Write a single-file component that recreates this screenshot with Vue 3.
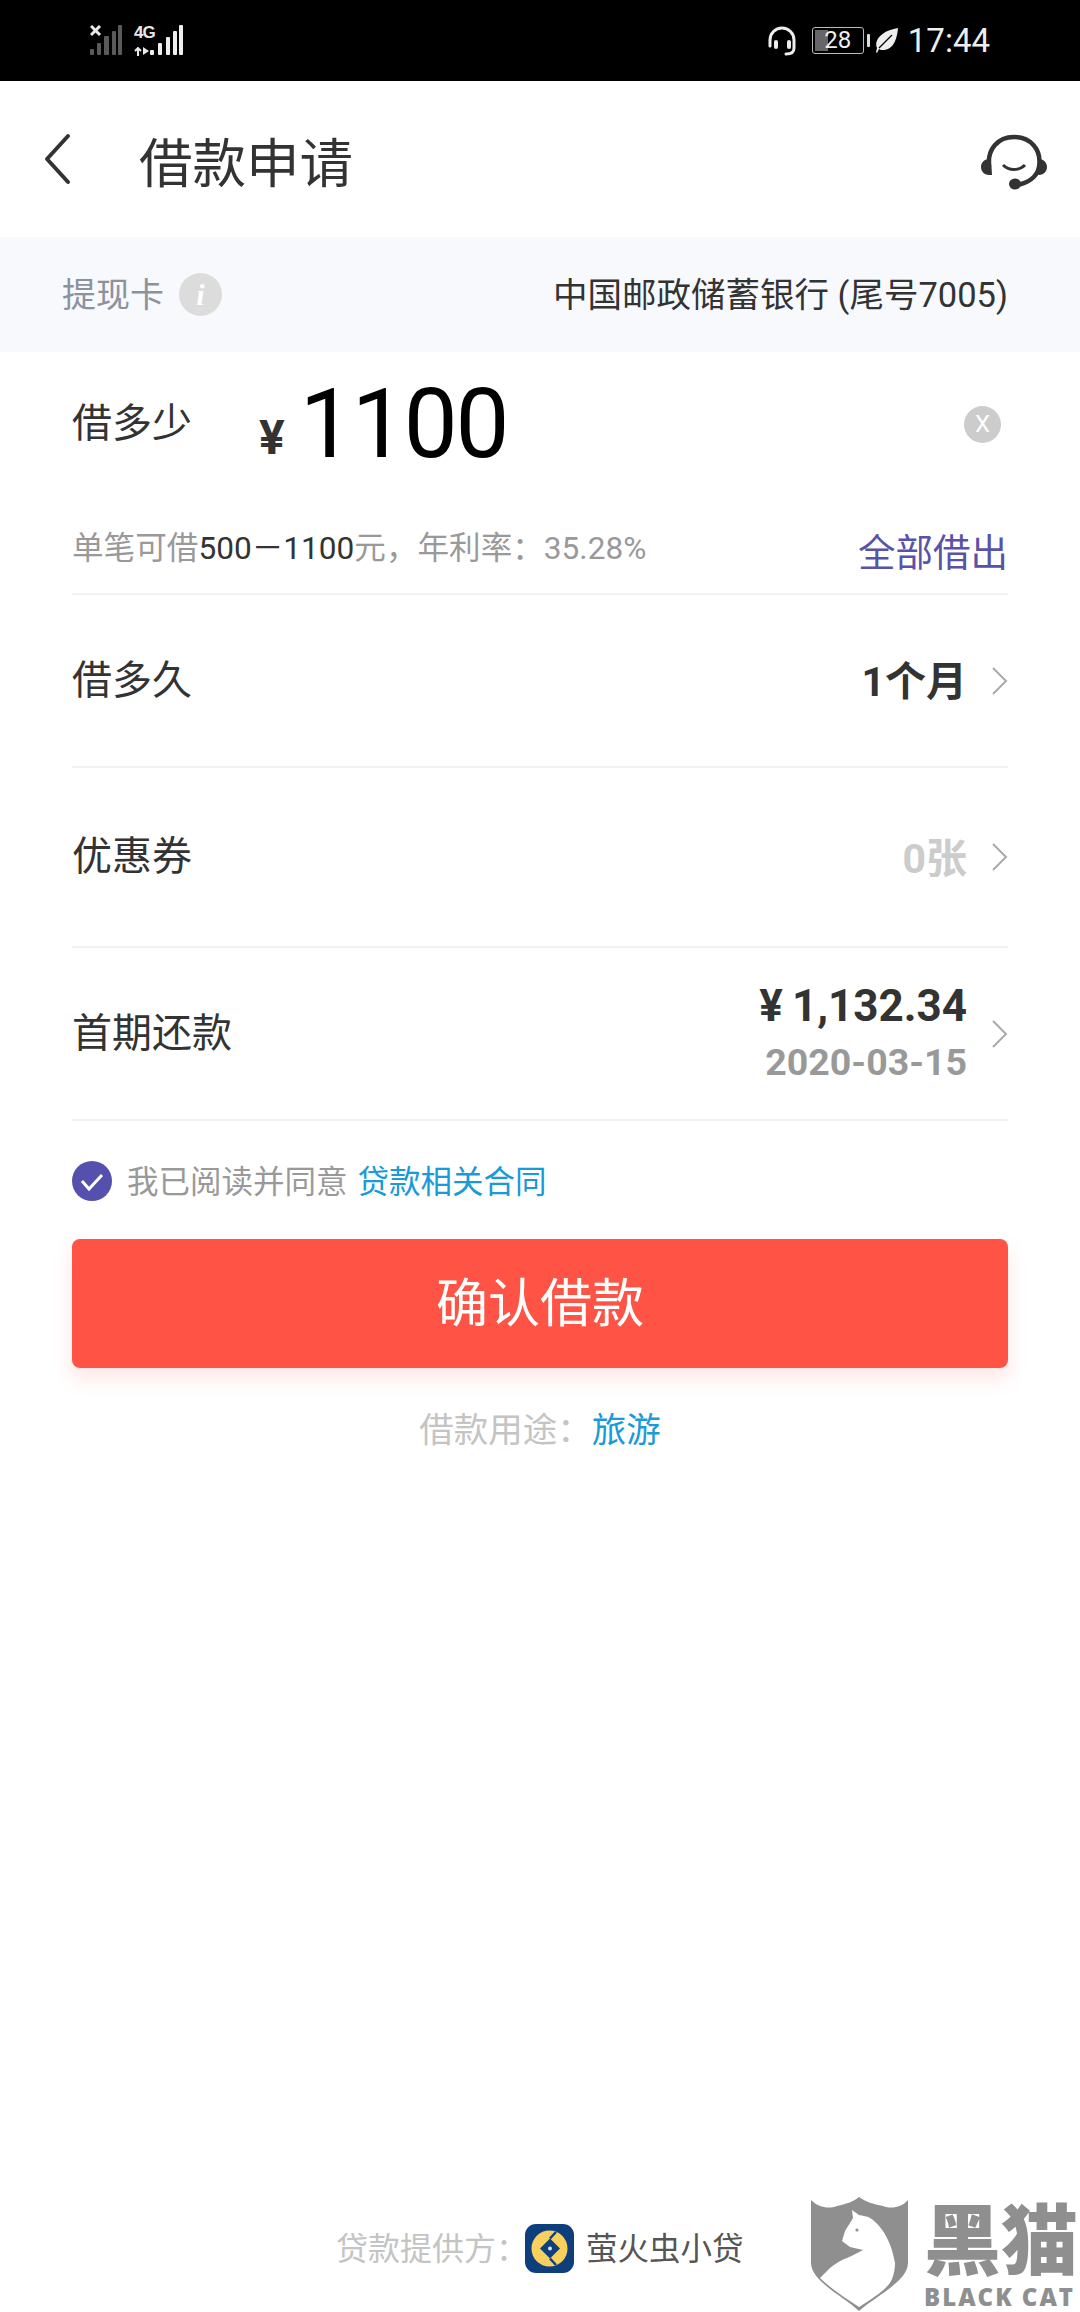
<script setup>
const rows = [
  { label: "借多久", value: "1个月", cls: "row-term" },
  { label: "优惠券", value: "0张", cls: "row-coupon muted" },
];
</script>

<template>
  <div class="page">
    <div class="status-bar">
      <div class="signals">
        <svg width="34" height="31" viewBox="0 0 34 31">
          <path d="M1 1l9 9M10 1l-9 9" stroke="#e8e8e8" stroke-width="3" />
          <g fill="#5a5a5a">
            <rect x="0" y="24" width="4" height="6" rx="1" />
            <rect x="7" y="18" width="4" height="12" rx="1" />
            <rect x="14" y="11" width="5" height="19" rx="1" />
            <rect x="22" y="6" width="4" height="24" rx="1" />
            <rect x="28" y="0" width="4" height="30" rx="1" />
          </g>
        </svg>
        <div class="net">
          <span class="net-label">4G</span>
          <svg width="15" height="9" viewBox="0 0 15 9">
            <path d="M4 9V1M1 4l3-3 3 3" fill="none" stroke="#e8e8e8" stroke-width="2" />
            <path d="M9 0l6 4-6 4z" fill="#e8e8e8" />
          </svg>
        </div>
        <svg width="34" height="31" viewBox="0 0 34 31" fill="#eee">
          <rect x="0" y="25" width="4" height="5" rx="1" />
          <rect x="8" y="18" width="4" height="12" rx="1" />
          <rect x="16" y="12" width="4" height="18" rx="1" />
          <rect x="23" y="6" width="4" height="24" rx="1" />
          <rect x="29" y="0" width="4" height="30" rx="1" />
        </svg>
      </div>
      <div class="status-right">
        <svg width="30" height="32" viewBox="0 0 30 32" fill="none">
          <path d="M3 21V15a12 12 0 0 1 24 0v8c0 4-2 6-8 6" stroke="#eee" stroke-width="3" stroke-linecap="round" />
          <rect x="7" y="15" width="4" height="9" rx="2" fill="#eee" />
          <rect x="20" y="15" width="4" height="9" rx="2" fill="#eee" />
        </svg>
        <div class="battery">
          <div class="battery-fill"></div>
          <span>28</span>
        </div>
        <div class="battery-tip"></div>
        <svg class="leaf" width="23" height="25" viewBox="0 0 23 25">
          <path d="M23 0C22 12 18 22 8 22c-1 0-3 0-4-1L2 25l-1-1 1-4C-2 11 9 2 23 0z" fill="#eee" />
          <path d="M4 20L17 7" stroke="#000" stroke-width="1.2" />
        </svg>
        <span class="time">17:44</span>
      </div>
    </div>

    <div class="nav">
      <svg class="back" width="32" height="52" viewBox="0 0 32 52" fill="none">
        <path d="M27 3L6 26l21 23" stroke="#333" stroke-width="4" stroke-linecap="round" stroke-linejoin="round" />
      </svg>
      <h1 class="title">借款申请</h1>
      <svg class="service" width="68" height="56" viewBox="0 0 68 56" fill="none">
        <path d="M9 33C7 15 18 3 34 3s28 12 25 30c-2 10-11 16-22 18" stroke="#333" stroke-width="4.5" />
        <path d="M9 25c-5 0-8 4-8 8s3 8 8 8h3l-1-16zM59 25c5 0 8 4 8 8s-3 8-8 8l-2-1z" fill="#333" />
        <ellipse cx="35" cy="50" rx="6" ry="5.5" fill="#333" />
        <path d="M23 31c6 6 16 6 22 0" stroke="#333" stroke-width="3" />
      </svg>
    </div>

    <div class="card-bar">
      <div class="card-left">
        <span class="card-label">提现卡</span>
        <span class="info">i</span>
      </div>
      <span class="card-name">中国邮政储蓄银行 (尾号7005)</span>
    </div>

    <div class="form">
      <div class="amount">
        <div class="amount-top">
          <span class="label">借多少</span>
          <span class="yen">¥</span>
          <span class="num">1100</span>
          <span class="clear">X</span>
        </div>
        <div class="hint-row">
          <span class="hint">单笔可借<b>500－1100</b>元，年利率：35.28%</span>
          <span class="all">全部借出</span>
        </div>
      </div>

      <div v-for="row in rows" :key="row.label" class="row" :class="row.cls">
        <span class="label">{{ row.label }}</span>
        <div class="row-right">
          <span class="row-value">{{ row.value }}</span>
          <svg class="chev" width="17" height="30" viewBox="0 0 17 30" fill="none">
            <path d="M2 2l13 13L2 28" stroke="#aaa" stroke-width="2" />
          </svg>
        </div>
      </div>

      <div class="row row-first">
        <span class="label">首期还款</span>
        <div class="row-right">
          <div class="repay">
            <span class="repay-amt"><i>¥</i>1,132.34</span>
            <span class="repay-date">2020-03-15</span>
          </div>
          <svg class="chev" width="17" height="30" viewBox="0 0 17 30" fill="none">
            <path d="M2 2l13 13L2 28" stroke="#aaa" stroke-width="2" />
          </svg>
        </div>
      </div>

      <div class="agree">
        <svg width="40" height="40" viewBox="0 0 40 40">
          <circle cx="20" cy="20" r="20" fill="#5550ad" />
          <path d="M10 20l7 8 13-14" fill="none" stroke="#fff" stroke-width="3" />
        </svg>
        <span class="agree-text">我已阅读并同意</span>
        <span class="link">贷款相关合同</span>
      </div>

      <button class="submit">确认借款</button>

      <div class="purpose">借款用途：<span class="link">旅游</span></div>
    </div>

    <div class="spacer"></div>

    <div class="footer">
      <span class="provider">贷款提供方：</span>
      <svg class="logo" width="49" height="49" viewBox="0 0 49 49">
        <rect width="49" height="49" rx="11" fill="#0e3f7c" />
        <circle cx="24.5" cy="24.5" r="18" fill="#f7d05e" />
        <path d="M25 14.5L35 24.5 25 34.5 15 24.5z" fill="#0e3f7c" />
        <path d="M25 14.5L31 8M25 34.5L31 41" stroke="#0e3f7c" stroke-width="2.5" />
        <circle cx="25" cy="24.5" r="2" fill="#cfeee0" />
      </svg>
      <span class="provider-name">萤火虫小贷</span>
    </div>

    <div class="watermark">
      <svg class="shield" width="98" height="115" viewBox="0 0 98 115">
        <path d="M0 3c8 8 18 9 26 6 9-2 16-4 22-9 7 5 14 7 24 9 8 3 18 2 25-6v63c0 18-32 33-49 48C32 99 0 84 0 66z" fill="#8f8f8f" />
        <path d="M41 13l7 5c4 1 8 1 11 3 13 8 22 26 25 45 0 8-2 15-5 20-7 9-20 17-31 24C36 102 20 92 9 81l10-10c5-4 11-8 17-10 6-3 11-5 16-8l-13-3-8-6 3-10 5-8 3-5z" fill="#fff" />
        <circle cx="46" cy="33" r="1.6" fill="#8f8f8f" />
      </svg>
      <div class="wm-text">
        <span class="wm-cn">黑猫</span>
        <span class="wm-en">BLACK CAT</span>
      </div>
    </div>
  </div>
</template>

<style>
html,
body {
  margin: 0;
  background: #fff;
}
</style>

<style scoped>
.page {
  position: relative;
  width: 1080px;
  height: 2312px;
  display: flex;
  flex-direction: column;
  overflow: hidden;
  background: #fff;
  font-family: Roboto, "Noto Sans CJK SC", sans-serif;
  color: #333;
}

.status-bar {
  height: 81px;
  flex: none;
  background: #000;
  display: flex;
  justify-content: space-between;
  align-items: center;
  padding: 0 90px;
  box-sizing: border-box;
}
.signals {
  display: flex;
  align-items: flex-start;
  margin-top: -1px;
}
.net {
  width: 16px;
  margin: 0 0 0 10px;
  display: flex;
  flex-direction: column;
  gap: 7px;
}
.net-label {
  font-size: 17px;
  line-height: 15px;
  font-weight: 700;
  letter-spacing: -1px;
  color: #e8e8e8;
  font-family: "Liberation Sans", sans-serif;
}
.status-right {
  display: flex;
  align-items: center;
}
.battery {
  position: relative;
  width: 52px;
  height: 27px;
  margin-left: 15px;
  border: 1px solid #bbb;
  border-radius: 3px;
  box-sizing: border-box;
  overflow: hidden;
  text-align: center;
}
.battery-fill {
  position: absolute;
  left: 2px;
  top: 2px;
  bottom: 2px;
  width: 13px;
  background: #666;
}
.battery span {
  position: relative;
  font-size: 24px;
  line-height: 25px;
  color: #eee;
  display: block;
}
.battery-tip {
  width: 3px;
  height: 13px;
  margin-left: 3px;
  background: #ddd;
  border-radius: 1px;
}
.leaf {
  margin-left: 5px;
}
.time {
  margin-left: 10px;
  font-size: 33px;
  color: #eee;
  line-height: 40px;
}

.nav {
  height: 156px;
  flex: none;
  display: flex;
  align-items: center;
  padding: 0 32px 0 41px;
  box-sizing: border-box;
}
.back {
  flex: none;
}
.title {
  margin: 0 0 0 66px;
  flex: 1;
  font-size: 53.5px;
  font-weight: 400;
  color: #333;
}
.service {
  margin-top: 6px;
}

.card-bar {
  height: 115px;
  flex: none;
  display: flex;
  justify-content: space-between;
  align-items: center;
  padding: 0 72px 0 62px;
  background: #f7f9fd;
  font-size: 34px;
}
.card-left {
  display: flex;
  align-items: center;
  gap: 15px;
  color: #8c929c;
}
.card-label {
  padding-bottom: 5px;
}
.info {
  width: 43px;
  height: 43px;
  border-radius: 50%;
  background: #dcdcdc;
  color: #fff;
  font-family: "Liberation Serif", serif;
  font-style: italic;
  font-weight: 700;
  font-size: 30px;
  line-height: 43px;
  text-align: center;
}
.card-name {
  font-size: 34.5px;
  color: #333;
  padding-bottom: 5px;
}

.form {
  padding: 0 72px;
}
.amount {
  height: 243px;
  box-sizing: border-box;
  border-bottom: 2px solid #f2f2f2;
}
.amount-top {
  height: 144px;
  display: flex;
  align-items: center;
}
.label {
  font-size: 40px;
  color: #333;
  padding-bottom: 8px;
}
.yen {
  margin-left: 67px;
  margin-top: 26px;
  font-size: 48px;
  font-weight: 700;
  color: #333;
}
.num {
  margin-left: 15px;
  font-size: 96px;
  letter-spacing: -2px;
  color: #000;
  flex: 1;
  line-height: 100px;
}
.clear {
  width: 37px;
  height: 37px;
  margin-right: 7px;
  border-radius: 50%;
  background: #ccc;
  color: #fff;
  font-size: 24px;
  line-height: 37px;
  text-align: center;
}
.hint-row {
  display: flex;
  justify-content: space-between;
  align-items: center;
  height: 60px;
  margin-top: 22px;
}
.hint {
  font-size: 31.6px;
  color: #999;
  padding-bottom: 6px;
}
.hint b {
  font-weight: 400;
  color: #333;
}
.all {
  font-size: 37.5px;
  color: #5a52a8;
  padding-top: 2px;
}

.row {
  display: flex;
  justify-content: space-between;
  align-items: center;
  box-sizing: border-box;
  border-bottom: 2px solid #f2f2f2;
}
.row-term {
  height: 173px;
}
.row-coupon {
  height: 180px;
}
.row-first {
  height: 173px;
}
.row-right {
  display: flex;
  align-items: center;
}
.row-value {
  font-size: 41px;
  font-weight: 700;
  color: #333;
  padding-bottom: 5px;
}
.muted .row-value {
  color: #ccc;
}
.chev {
  margin-left: 24px;
}
.repay {
  display: flex;
  flex-direction: column;
  align-items: flex-end;
}
.repay-amt {
  font-size: 44px;
  line-height: 56px;
  font-weight: 700;
  color: #333;
}
.repay-amt i {
  font-style: normal;
  margin-right: 9px;
}
.repay-date {
  font-size: 37.5px;
  line-height: 56px;
  font-weight: 700;
  color: #999;
}

.agree {
  display: flex;
  align-items: center;
  height: 40px;
  margin-top: 40px;
  font-size: 31.5px;
}
.agree-text {
  margin-left: 15px;
  color: #999;
  padding-bottom: 5px;
}
.agree .link {
  margin-left: 10px;
  padding-bottom: 5px;
}
.link {
  color: #1a9ad6;
}

.submit {
  display: block;
  width: 100%;
  height: 129px;
  margin-top: 38px;
  padding: 0 0 8px;
  border: none;
  border-radius: 8px;
  background: #ff5346;
  box-shadow: 0 10px 20px rgba(255, 83, 70, 0.15);
  color: #fff;
  font-family: inherit;
  font-size: 52px;
}

.purpose {
  margin-top: 41px;
  text-align: center;
  font-size: 34.5px;
  line-height: 42px;
  color: #c4c4c4;
}

.spacer {
  flex: 1;
}

.footer {
  height: 49px;
  margin-bottom: 39px;
  padding-left: 336px;
  display: flex;
  align-items: center;
}
.provider {
  font-size: 32px;
  color: #c4c4c4;
  padding-bottom: 5px;
}
.logo {
  margin-left: -3px;
}
.provider-name {
  margin-left: 12px;
  font-size: 31.5px;
  color: #555;
  padding-bottom: 5px;
}

.watermark {
  position: absolute;
  left: 811px;
  top: 2197px;
  display: flex;
  gap: 15px;
}
.shield {
  flex: none;
}
.wm-text {
  display: flex;
  flex-direction: column;
  padding-top: 8px;
  color: #8f8f8f;
}
.wm-cn {
  font-size: 77px;
  line-height: 76px;
  font-weight: 900;
  white-space: nowrap;
}
.wm-en {
  margin-top: 4px;
  font-family: "Open Sans", sans-serif;
  font-size: 24px;
  line-height: 24px;
  font-weight: 800;
  letter-spacing: 2px;
  white-space: nowrap;
}
</style>
